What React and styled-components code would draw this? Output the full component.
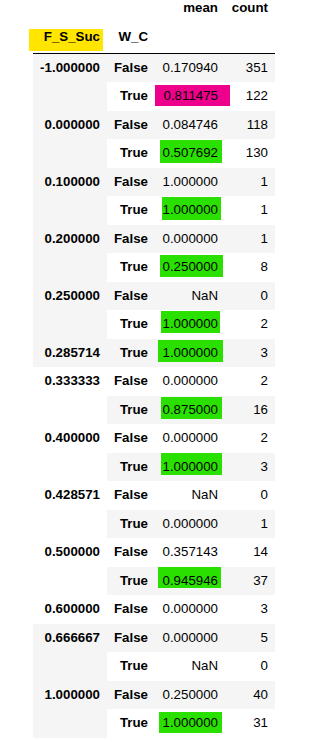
import React from "react";
import styled, { createGlobalStyle } from "styled-components";

const Global = createGlobalStyle`
  html, body { margin: 0; padding: 0; background: #fff; }
  body {
    font-family: "Liberation Sans", Arial, sans-serif;
    font-size: 13.3px;
    color: #000;
  }
`;

const ROW_H = 28.5;
const TEXT_LH = 27;
const STRIPE = "#f5f5f5";
const GREEN = "#2ae000";
const MAGENTA = "#ec008c";
const YELLOW = "#ffe500";

const Table = styled.div`
  margin-left: 33px;
  width: 242px;
`;

const HeadRow = styled.div`
  display: grid;
  grid-template-columns: 74px 48px 70px 50px;
  height: ${(p) => p.$h}px;
  border-bottom: ${(p) => (p.$border ? "1px solid #000" : "none")};
`;

const HeadCell = styled.div`
  font-weight: bold;
  text-align: right;
  padding-right: 7px;
  padding-top: ${(p) => p.$pt || 0}px;
  line-height: ${(p) => p.$lh}px;
`;

const IndexNameCell = styled.div`
  padding-top: 7.3px;
`;

const IndexName = styled.div`
  margin-left: -4px;
  width: 73.7px;
  height: 22px;
  box-sizing: border-box;
  padding-right: 2.7px;
  background: ${YELLOW};
  font-weight: bold;
  text-align: right;
  line-height: 15px;
`;

const Group = styled.div`
  display: flex;
`;

const IndexCell = styled.div`
  width: 74px;
  box-sizing: border-box;
  padding-right: 7px;
  text-align: right;
  font-weight: bold;
  line-height: ${TEXT_LH}px;
  background: ${(p) => (p.$grey ? STRIPE : "#fff")};
`;

const SubRows = styled.div`
  display: flex;
  flex-direction: column;
`;

const Row = styled.div`
  display: grid;
  grid-template-columns: 48px 70px 50px;
  height: ${ROW_H}px;
  background: ${(p) => (p.$grey ? STRIPE : "#fff")};
`;

const Cell = styled.div`
  text-align: right;
  padding-right: 7px;
  line-height: ${TEXT_LH}px;
  font-weight: ${(p) => (p.$bold ? "bold" : "normal")};
  display: flex;
  justify-content: flex-end;
  align-items: flex-start;
`;

const Highlight = styled.div`
  flex: none;
  box-sizing: border-box;
  width: ${(p) => p.$w}px;
  height: ${(p) => p.$h}px;
  margin-top: ${(p) => p.$t}px;
  margin-right: ${(p) => p.$mr}px;
  background: ${(p) => p.$bg};
`;

const HighlightText = styled.span`
  display: block;
  text-align: right;
  padding-right: ${(p) => p.$pr}px;
  margin-top: ${(p) => -p.$t}px;
  line-height: ${TEXT_LH}px;
`;

const TEXT_RIGHT = 218;

const G = (l, r, t, h) => ({ l, r, t, h, bg: GREEN });

const groups = [
  { idx: "-1.000000", rows: [
    ["False", "0.170940", "351"],
    ["True", "0.811475", "122", { l: 155, r: 230, t: 2.5, h: 21.5, bg: MAGENTA }],
  ]},
  { idx: "0.000000", rows: [
    ["False", "0.084746", "118"],
    ["True", "0.507692", "130", G(160, 221.7, 0.5, 23)],
  ]},
  { idx: "0.100000", rows: [
    ["False", "1.000000", "1"],
    ["True", "1.000000", "1", G(162, 221, 0.5, 23)],
  ]},
  { idx: "0.200000", rows: [
    ["False", "0.000000", "1"],
    ["True", "0.250000", "8", G(160, 222.7, 1.8, 22.4)],
  ]},
  { idx: "0.250000", rows: [
    ["False", "NaN", "0"],
    ["True", "1.000000", "2", G(161, 220, 0.5, 22.7)],
  ]},
  { idx: "0.285714", rows: [
    ["True", "1.000000", "3", G(158.3, 222.7, 1, 22.7)],
  ]},
  { idx: "0.333333", rows: [
    ["False", "0.000000", "2"],
    ["True", "0.875000", "16", G(161, 222.3, 1, 22)],
  ]},
  { idx: "0.400000", rows: [
    ["False", "0.000000", "2"],
    ["True", "1.000000", "3", G(161.3, 221.7, 0.3, 22)],
  ]},
  { idx: "0.428571", rows: [
    ["False", "NaN", "0"],
    ["True", "0.000000", "1"],
  ]},
  { idx: "0.500000", rows: [
    ["False", "0.357143", "14"],
    ["True", "0.945946", "37", G(158.3, 220.7, 0, 21.6)],
  ]},
  { idx: "0.600000", rows: [
    ["False", "0.000000", "3"],
  ]},
  { idx: "0.666667", rows: [
    ["False", "0.000000", "5"],
    ["True", "NaN", "0"],
  ]},
  { idx: "1.000000", rows: [
    ["False", "0.250000", "40"],
    ["True", "1.000000", "31", G(159.3, 222.3, 2.5, 21.5)],
  ]},
];

function MeanCell({ value, hl }) {
  if (!hl) return <Cell>{value}</Cell>;
  return (
    <Cell>
      <Highlight
        $w={hl.r - hl.l}
        $h={hl.h}
        $t={hl.t}
        $mr={TEXT_RIGHT - hl.r}
        $bg={hl.bg}
      >
        <HighlightText $pr={hl.r - TEXT_RIGHT} $t={hl.t}>
          {value}
        </HighlightText>
      </Highlight>
    </Cell>
  );
}

export default function App() {
  let counter = 0;
  return (
    <>
      <Global />
      <Table>
        <HeadRow $h={22}>
          <div />
          <div />
          <HeadCell $lh={16}>mean</HeadCell>
          <HeadCell $lh={16}>count</HeadCell>
        </HeadRow>
        <HeadRow $h={30.7} $border>
          <IndexNameCell>
            <IndexName>F_S_Suc</IndexName>
          </IndexNameCell>
          <HeadCell $lh={15} $pt={7.3}>W_C</HeadCell>
          <div />
          <div />
        </HeadRow>
        {groups.map((g) => {
          const start = counter;
          counter += g.rows.length;
          return (
            <Group key={g.idx}>
              <IndexCell $grey={start % 2 === 0}>{g.idx}</IndexCell>
              <SubRows>
                {g.rows.map((r, i) => (
                  <Row key={i} $grey={(start + i) % 2 === 0}>
                    <Cell $bold>{r[0]}</Cell>
                    <MeanCell value={r[1]} hl={r[3]} />
                    <Cell>{r[2]}</Cell>
                  </Row>
                ))}
              </SubRows>
            </Group>
          );
        })}
      </Table>
    </>
  );
}
